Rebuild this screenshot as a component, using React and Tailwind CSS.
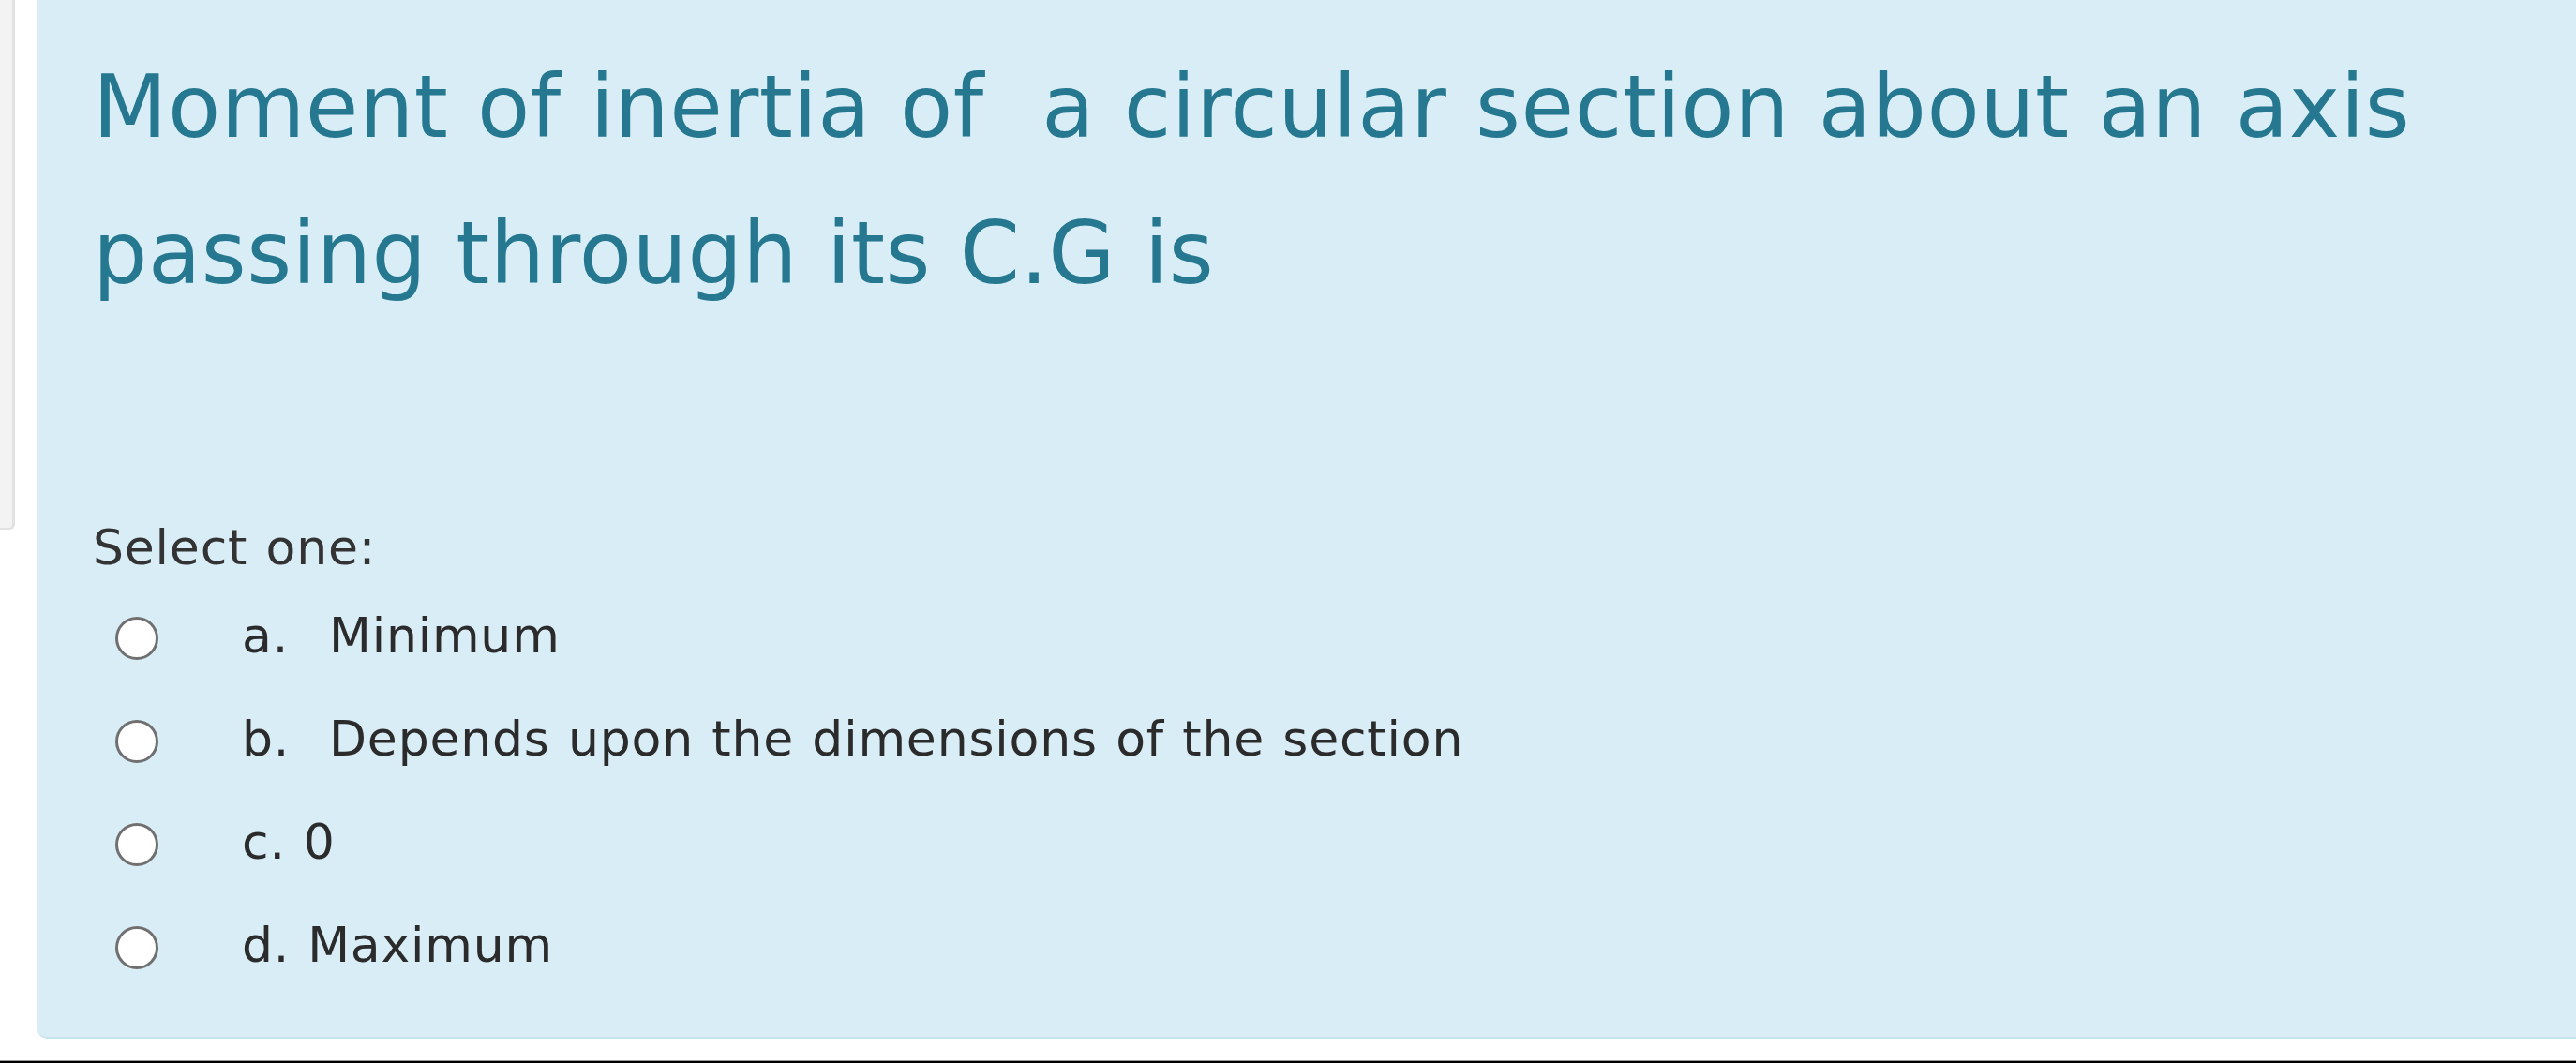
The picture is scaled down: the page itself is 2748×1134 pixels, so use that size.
import React from 'react'

const options = [
  { num: 'a.', text: 'Minimum', wide: true },
  { num: 'b.', text: 'Depends upon the dimensions of the section', wide: true },
  { num: 'c.', text: '0', wide: false },
  { num: 'd.', text: 'Maximum', wide: false },
]

function Radio() {
  return <span className="mt-[35px] ml-[24px] block h-[46px] w-[46px] shrink-0 rounded-full border-[3px] border-[#707070] bg-white" />
}

export default function App() {
  return (
    <div className="flex h-[1134px] w-[2748px] flex-col overflow-hidden bg-white" style={{ fontFamily: '"DejaVu Sans", Verdana, sans-serif' }}>
      <div className="flex h-[1108px] gap-[24px]">
        {/* side panel stub */}
        <div className="w-[16px] shrink-0">
          <div className="h-[565px] rounded-br-[6px] border-r-[3px] border-b-[2px] border-[#e2e2e2] bg-[#f3f3f3]" />
        </div>

        {/* question card */}
        <div className="flex-1 rounded-bl-[10px] border-b-2 border-[#c6e3ee] bg-[#d9edf7] pl-[59px] pt-[37px] pb-[45px]">
          <div className="text-[92px] leading-[156px] tracking-[0.5px] [word-spacing:1px] text-[#25788f]">
            Moment of inertia of{'\u00a0'} a circular section about an axis
            <br />
            passing through its C.G is
          </div>

          <div className="mt-[196px] text-[52px] leading-[78px] tracking-[0.8px] [word-spacing:2px] text-[#333]">Select one:</div>

          <div className="flex flex-col">
            {options.map(o => (
              <div key={o.num} className="flex h-[110px] items-start">
                <Radio />
                <div className="ml-[89px] flex text-[52px] leading-[110px] tracking-[0.8px] text-[#2b2b2b]">
                  <span className={o.wide ? 'w-[93px]' : ''}>{o.num}</span>
                  {!o.wide && <span className="w-[19px]" />}
                  <span className="[word-spacing:2px]">{o.text}</span>
                </div>
              </div>
            ))}
          </div>
        </div>
      </div>

      <div className="h-[23px]" />
      <div className="h-[1px] bg-[#9a9a9a]" />
      <div className="h-[2px] bg-black" />
    </div>
  )
}
